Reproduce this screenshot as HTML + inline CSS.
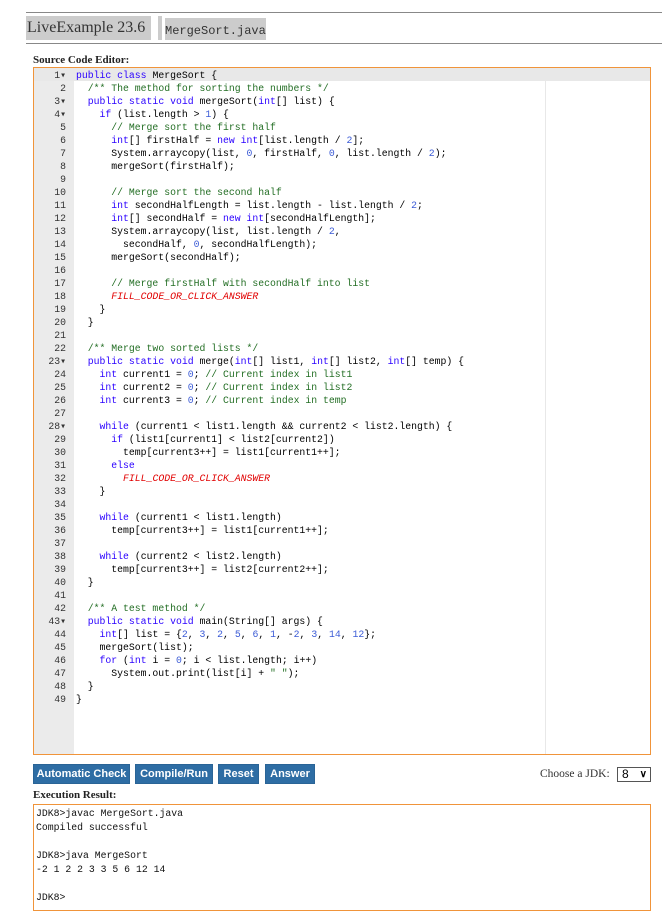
<!DOCTYPE html>
<html><head><meta charset="utf-8">
<style>
*{margin:0;padding:0;box-sizing:border-box}
body{width:662px;height:921px;background:#fff;position:relative;overflow:hidden;font-family:"Liberation Serif",serif}
.hr{position:absolute;left:26px;right:0;height:1px;background:#888}
.title{position:absolute;left:26px;top:16px;height:24px;width:125px;background:#ccc;font-size:16px;line-height:24px;padding-left:1px;color:#333;white-space:nowrap;overflow:hidden}
.bar{position:absolute;left:158px;top:16px;width:4px;height:24px;background:#ccc}
.file{position:absolute;left:165px;top:18px;width:101px;height:22px;background:#ccc;font-family:"Liberation Mono",monospace;font-size:12px;line-height:26px;color:#333;white-space:nowrap}
.lbl{position:absolute;left:33px;font-size:11px;font-weight:bold;color:#222;white-space:nowrap}
.ed{position:absolute;left:33px;top:67px;width:618px;height:688px;border:1px solid #f0943a;background:#fff;overflow:hidden}
.gut{position:absolute;left:0;top:0;width:40px;height:100%;background:#ebebeb}
.pm{position:absolute;left:511px;top:0;width:1px;height:100%;background:#e8e8e8}
.act{position:absolute;left:0;top:0;width:100%;height:13px;background:#e8e8e8}
.ln,.code{position:absolute;top:1px;font-family:"Liberation Mono",monospace;font-size:9.8px;line-height:13px;white-space:pre}
.ln{left:0;width:32px;text-align:right;color:#333}
.code{left:42px;color:#000}
.k{color:#2a00ff}.c{color:#236e24}.n{color:#3b5bd6}.f{color:#e10000;font-style:italic}
.btn{position:absolute;top:764px;height:20px;background:#2e6da4;color:#fff;font-family:"Liberation Sans",sans-serif;font-weight:bold;font-size:11px;line-height:19px;text-align:center;border:1px solid #2a6496;white-space:nowrap}
.out{position:absolute;left:33px;top:804px;width:618px;height:107px;border:1px solid #f0943a;font-family:"Liberation Mono",monospace;font-size:9.8px;line-height:14px;white-space:pre;padding:2px 0 0 2px;color:#111}
.jdk{position:absolute;left:540px;top:768px;font-size:11.5px;color:#333}
.sel{position:absolute;left:617px;top:767px;width:34px;height:15px;border:1px solid #555;font-family:"Liberation Sans",sans-serif;font-size:12px;line-height:13px;padding-left:4px}
</style></head><body>
<div class="hr" style="top:12px"></div>
<div class="title">LiveExample 23.6</div>
<div class="bar"></div>
<div class="file">MergeSort.java</div>
<div class="hr" style="top:43px"></div>
<div class="lbl" style="top:54px">Source Code Editor:</div>
<div class="ed">
<div class="gut"></div><div class="act"></div><div class="pm"></div>
<div class="ln">1▾
2
3▾
4▾
5
6
7
8
9
10
11
12
13
14
15
16
17
18
19
20
21
22
23▾
24
25
26
27
28▾
29
30
31
32
33
34
35
36
37
38
39
40
41
42
43▾
44
45
46
47
48
49</div>
<div class="code"><span class="k">public class</span> MergeSort {
  <span class="c">/** The method for sorting the numbers */</span>
  <span class="k">public static void</span> mergeSort(<span class="k">int</span>[] list) {
    <span class="k">if</span> (list.length &gt; <span class="n">1</span>) {
      <span class="c">// Merge sort the first half</span>
      <span class="k">int</span>[] firstHalf = <span class="k">new int</span>[list.length / <span class="n">2</span>];
      System.arraycopy(list, <span class="n">0</span>, firstHalf, <span class="n">0</span>, list.length / <span class="n">2</span>);
      mergeSort(firstHalf);

      <span class="c">// Merge sort the second half</span>
      <span class="k">int</span> secondHalfLength = list.length - list.length / <span class="n">2</span>;
      <span class="k">int</span>[] secondHalf = <span class="k">new int</span>[secondHalfLength];
      System.arraycopy(list, list.length / <span class="n">2</span>,
        secondHalf, <span class="n">0</span>, secondHalfLength);
      mergeSort(secondHalf);

      <span class="c">// Merge firstHalf with secondHalf into list</span>
      <span class="f">FILL_CODE_OR_CLICK_ANSWER</span>
    }
  }

  <span class="c">/** Merge two sorted lists */</span>
  <span class="k">public static void</span> merge(<span class="k">int</span>[] list1, <span class="k">int</span>[] list2, <span class="k">int</span>[] temp) {
    <span class="k">int</span> current1 = <span class="n">0</span>; <span class="c">// Current index in list1</span>
    <span class="k">int</span> current2 = <span class="n">0</span>; <span class="c">// Current index in list2</span>
    <span class="k">int</span> current3 = <span class="n">0</span>; <span class="c">// Current index in temp</span>

    <span class="k">while</span> (current1 &lt; list1.length &amp;&amp; current2 &lt; list2.length) {
      <span class="k">if</span> (list1[current1] &lt; list2[current2])
        temp[current3++] = list1[current1++];
      <span class="k">else</span>
        <span class="f">FILL_CODE_OR_CLICK_ANSWER</span>
    }

    <span class="k">while</span> (current1 &lt; list1.length)
      temp[current3++] = list1[current1++];

    <span class="k">while</span> (current2 &lt; list2.length)
      temp[current3++] = list2[current2++];
  }

  <span class="c">/** A test method */</span>
  <span class="k">public static void</span> main(String[] args) {
    <span class="k">int</span>[] list = {<span class="n">2</span>, <span class="n">3</span>, <span class="n">2</span>, <span class="n">5</span>, <span class="n">6</span>, <span class="n">1</span>, -<span class="n">2</span>, <span class="n">3</span>, <span class="n">14</span>, <span class="n">12</span>};
    mergeSort(list);
    <span class="k">for</span> (<span class="k">int</span> i = <span class="n">0</span>; i &lt; list.length; i++)
      System.out.print(list[i] + <span class="c">" "</span>);
  }
}</div>
</div>
<div class="btn" style="left:33px;width:97px">Automatic Check</div>
<div class="btn" style="left:135px;width:78px">Compile/Run</div>
<div class="btn" style="left:218px;width:41px">Reset</div>
<div class="btn" style="left:265px;width:50px">Answer</div>
<div class="jdk">Choose a JDK:</div>
<div class="sel">8 <span style="position:absolute;right:3px;top:0;font-size:10px;font-weight:bold">&#x2228;</span></div>
<div class="lbl" style="top:789px">Execution Result:</div>
<div class="out">JDK8&gt;javac MergeSort.java
Compiled successful

JDK8&gt;java MergeSort
-2 1 2 2 3 3 5 6 12 14

JDK8&gt;</div>
</body></html>
